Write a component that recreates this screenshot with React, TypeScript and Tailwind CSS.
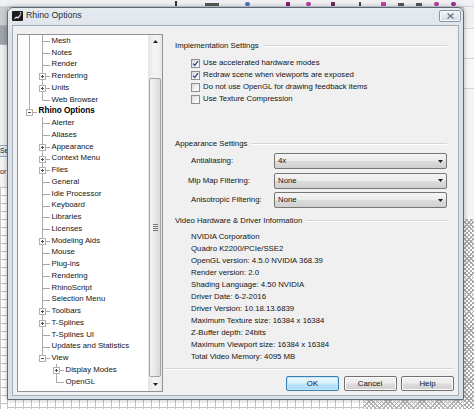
import React from 'react';

// Rhino Options dialog (OpenGL page) over a sliver of the Rhino main window.

type TreeNode = {
  label: string;
  level: number;
  box?: 'plus' | 'minus';
  last?: boolean;
  through?: number[];
  bold?: boolean;
};

const ROW_H = 11.75;
const LINE = '#a8a8a8';
const LEVEL_X = [11.5, 24.5, 38.5];
const lineX = (level: number) => LEVEL_X[level];

const treeNodes: TreeNode[] = [
  { label: 'Mesh', level: 1, through: [0] },
  { label: 'Notes', level: 1, through: [0] },
  { label: 'Render', level: 1, through: [0] },
  { label: 'Rendering', level: 1, box: 'plus', through: [0] },
  { label: 'Units', level: 1, box: 'plus', through: [0] },
  { label: 'Web Browser', level: 1, last: true, through: [0] },
  { label: 'Rhino Options', level: 0, box: 'minus', last: true, bold: true },
  { label: 'Alerter', level: 1 },
  { label: 'Aliases', level: 1 },
  { label: 'Appearance', level: 1, box: 'plus' },
  { label: 'Context Menu', level: 1, box: 'plus' },
  { label: 'Files', level: 1, box: 'plus' },
  { label: 'General', level: 1 },
  { label: 'Idle Processor', level: 1 },
  { label: 'Keyboard', level: 1 },
  { label: 'Libraries', level: 1 },
  { label: 'Licenses', level: 1 },
  { label: 'Modeling Aids', level: 1, box: 'plus' },
  { label: 'Mouse', level: 1 },
  { label: 'Plug-ins', level: 1 },
  { label: 'Rendering', level: 1 },
  { label: 'RhinoScript', level: 1 },
  { label: 'Selection Menu', level: 1 },
  { label: 'Toolbars', level: 1, box: 'plus' },
  { label: 'T-Splines', level: 1, box: 'plus' },
  { label: 'T-Splines UI', level: 1 },
  { label: 'Updates and Statistics', level: 1 },
  { label: 'View', level: 1, box: 'minus', last: true },
  { label: 'Display Modes', level: 2, box: 'plus' },
  { label: 'OpenGL', level: 2, last: true },
];

const driverInfo = [
  'NVIDIA Corporation',
  'Quadro K2200/PCIe/SSE2',
  'OpenGL version: 4.5.0 NVIDIA 368.39',
  'Render version: 2.0',
  'Shading Language: 4.50 NVIDIA',
  'Driver Date: 6-2-2016',
  'Driver Version: 10.18.13.6839',
  'Maximum Texture size: 16384 x 16384',
  'Z-Buffer depth: 24bits',
  'Maximum Viewport size: 16384 x 16384',
  'Total Video Memory: 4095 MB',
];

function TreeRow({ node }: { node: TreeNode }) {
  const x = lineX(node.level);
  const cy = 6.5;
  return (
    <div className="flex h-[11.75px] items-center whitespace-nowrap">
      <svg width={x + 9} height={ROW_H} className="shrink-0">
        {(node.through ?? []).map((l) => (
          <line key={l} x1={lineX(l)} x2={lineX(l)} y1={0} y2={ROW_H} stroke={LINE} />
        ))}
        {node.box ? (
          <>
            <line x1={x} x2={x} y1={0} y2={cy - 3} stroke={LINE} />
            {!node.last && <line x1={x} x2={x} y1={cy + 3} y2={ROW_H} stroke={LINE} />}
            <line x1={x + 3} x2={x + 7.5} y1={cy} y2={cy} stroke={LINE} />
            <rect x={x - 3} y={cy - 3} width={6} height={6} fill="#fdfdfd" stroke="#b0b0b0" />
            <line x1={x - 1.5} x2={x + 1.5} y1={cy} y2={cy} stroke="#505050" />
            {node.box === 'plus' && (
              <line x1={x} x2={x} y1={cy - 1.5} y2={cy + 1.5} stroke="#505050" />
            )}
          </>
        ) : (
          <>
            <line x1={x} x2={x} y1={0} y2={node.last ? cy : ROW_H} stroke={LINE} />
            <line x1={x} x2={x + 7.5} y1={cy} y2={cy} stroke={LINE} />
          </>
        )}
      </svg>
      <span className={node.bold ? 'text-[8.2px] font-bold text-black' : ''}>{node.label}</span>
    </div>
  );
}

function Arrow({ up }: { up?: boolean }) {
  return (
    <svg width="5" height="3" viewBox="0 0 5 3">
      <polygon points={up ? '0,3 5,3 2.5,0' : '0,0 5,0 2.5,3'} fill="#222" />
    </svg>
  );
}

function ScrollBar() {
  return (
    <div className="flex w-[14px] shrink-0 flex-col bg-[linear-gradient(to_right,#e4e4e4,#f3f3f3_40%,#f3f3f3_70%,#e6e6e6)]">
      <div className="flex h-[13px] items-center justify-center">
        <Arrow up />
      </div>
      <div className="h-[30px]" />
      <div className="mx-[1px] flex flex-1 items-center justify-center rounded-[2px] border border-[#a3a3a3] bg-[linear-gradient(to_right,#f4f4f4,#e8e8e8_50%,#d8d8d8)]">
        <div className="flex flex-col gap-[1px]">
          <div className="h-px w-[5px] bg-[#7a7a7a]" />
          <div className="h-px w-[5px] bg-[#7a7a7a]" />
          <div className="h-px w-[5px] bg-[#7a7a7a]" />
          <div className="h-px w-[5px] bg-[#7a7a7a]" />
        </div>
      </div>
      <div className="h-px" />
      <div className="flex h-[13px] items-center justify-center">
        <Arrow />
      </div>
    </div>
  );
}

function GroupHeader({ title }: { title: string }) {
  return (
    <div className="flex h-[10px] items-center">
      <span className="whitespace-nowrap">{title}</span>
      <div className="ml-[4px] h-[2px] flex-1 border-t border-b border-t-[#d5d5d5] border-b-white" />
    </div>
  );
}

function CheckRow({ checked, label }: { checked?: boolean; label: string }) {
  return (
    <div className="flex h-[12px] items-center">
      <span className="flex h-[9px] w-[9px] items-center justify-center border border-[#8e8f8f] bg-[linear-gradient(135deg,#d8d8d8,#f4f4f4_60%,#ffffff)]">
        {checked && (
          <svg width="7" height="7" viewBox="0 0 7 7">
            <path d="M1 3.6 L2.8 5.5 L6 1.2" fill="none" stroke="#2d4c96" strokeWidth="1.3" />
          </svg>
        )}
      </span>
      <span className="ml-[3px] whitespace-nowrap">{label}</span>
    </div>
  );
}

function ComboRow({ label, value, shift }: { label: string; value: string; shift?: boolean }) {
  return (
    <div className="flex h-[16px] items-center">
      <span className={shift ? '-ml-[3px] w-[86px]' : 'w-[83px]'}>{label}</span>
      <div className="flex h-full w-[173px] items-center rounded-[2px] border border-[#767676] bg-[linear-gradient(#f4f4f4,#ebebeb_48%,#dcdcdc_52%,#d0d0d0)] pl-[3px] pr-[3px]">
        <span className="flex-1">{value}</span>
        <Arrow />
      </div>
    </div>
  );
}

function DialogButton({ label, primary }: { label: string; primary?: boolean }) {
  return (
    <div
      className={
        primary
          ? 'flex h-[15px] w-[53px] items-center justify-center rounded-[2px] border border-[#3c7fb1] bg-[linear-gradient(#eaf6fd,#d9f0fc_48%,#bee6fd_52%,#a7d9f5)] shadow-[inset_0_0_0_1px_#c4e5f6]'
          : 'flex h-[15px] w-[53px] items-center justify-center rounded-[2px] border border-[#707070] bg-[linear-gradient(#f2f2f2,#ebebeb_48%,#dddddd_52%,#cfcfcf)] shadow-[inset_0_0_0_1px_#fcfcfc]'
      }
    >
      {label}
    </div>
  );
}

function RhinoIcon() {
  return (
    <svg width="11" height="10" viewBox="0 0 11 10">
      <rect x="0" y="0" width="11" height="10" rx="1" fill="#1d1d1d" />
      <path d="M1.5 8.5 L4 5.5 L6 6 L9.5 1.5 L8.5 4.5 L6.5 7.5 L4.5 7 Z" fill="#f4f4f4" />
      <path d="M7.5 1 L9.5 1.2 L8.6 2.4 Z" fill="#f4f4f4" />
    </svg>
  );
}

function CloseButton() {
  return (
    <div className="-mr-[2px] mt-[2px] flex h-[12px] w-[22px] items-center justify-center rounded-[2px] border border-[#8796a6] bg-[linear-gradient(#f3f6f9,#e2e8ee_50%,#d3dbe4)] shadow-[inset_0_0_0_1px_#f7f9fb]">
      <svg width="7" height="6" viewBox="0 0 7 6">
        <path d="M0.5 0.5 L6.5 5.5 M6.5 0.5 L0.5 5.5" stroke="#6a7888" strokeWidth="1.4" />
      </svg>
    </div>
  );
}

function OptionsDialog() {
  return (
    <div className="absolute left-[7px] top-[7px] flex h-[393px] w-[457px] flex-col rounded-t-[6px] border border-[#5e6976] bg-[linear-gradient(#e6ebf0,#dbe2e9_30px,#d9e0e8)] px-[4px] pb-[3px] shadow-[0_0_5px_rgba(0,0,0,0.3)]">
      <div className="flex h-[17px] items-start">
        <div className="mt-[3px]">
          <RhinoIcon />
        </div>
        <span className="ml-[3px] mt-[3px] text-[8.8px] text-[#24303c]">Rhino Options</span>
        <div className="flex-1" />
        <CloseButton />
      </div>

      <div className="flex flex-1 border border-[#a4aeb9] bg-[#f0f0f0]">
        <div className="mb-[3px] ml-[4px] mt-[8px] flex w-[146px] shrink-0 border border-[#8e939a] bg-white">
          <div className="flex-1 overflow-hidden">
            {treeNodes.map((n, i) => (
              <TreeRow key={i} node={n} />
            ))}
          </div>
          <ScrollBar />
        </div>

        <div className="flex flex-1 flex-col pb-[4px] pl-[2px] pr-[4px]">
          <div className="pl-[10px] pr-[7px]">
            <div className="mt-[15px]">
              <GroupHeader title="Implementation Settings" />
            </div>
            <div className="mt-[6px] pl-[16px]">
              <CheckRow checked label="Use accelerated hardware modes" />
              <CheckRow checked label="Redraw scene when viewports are exposed" />
              <CheckRow label="Do not use OpenGL for drawing feedback items" />
              <CheckRow label="Use Texture Compression" />
            </div>

            <div className="mt-[34px]">
              <GroupHeader title="Appearance Settings" />
            </div>
            <div className="mt-[4px] flex flex-col gap-[3.5px] pl-[16px]">
              <ComboRow label="Antialiasing:" value="4x" />
              <ComboRow label="Mip Map Filtering:" value="None" shift />
              <ComboRow label="Anisotropic Filtering:" value="None" />
            </div>

            <div className="mt-[8px]">
              <GroupHeader title="Video Hardware & Driver Information" />
            </div>
            <div className="mt-[4.7px] pl-[16px]">
              {driverInfo.map((t) => (
                <div key={t} className="flex h-[12px] items-center whitespace-nowrap">
                  {t}
                </div>
              ))}
            </div>
          </div>

          <div className="mt-[5.3px] h-[2px] border-t border-b border-t-[#d5d5d5] border-b-white" />

          <div className="mt-[6px] flex justify-end gap-[4.5px]">
            <DialogButton label="OK" primary />
            <DialogButton label="Cancel" />
            <DialogButton label="Help" />
          </div>
        </div>
      </div>
    </div>
  );
}

function BackgroundApp() {
  return (
    <div className="flex h-full w-full flex-col">
      <div className="flex h-[7px] items-end gap-[6px] border-b border-[#cfd4da] bg-[#eef0f3] pl-[175px]">
        <div className="h-[5px] w-[2px] bg-[#333]" />
        <div className="ml-[22px] h-[3px] w-[14px] bg-[#555]" />
        <div className="ml-[20px] h-[4px] w-[5px] rounded-full bg-[#4a6fc2]" />
        <div className="ml-[30px] h-[4px] w-[4px] bg-[#8d1c6a]" />
        <div className="ml-[10px] h-[4px] w-[5px] rounded-full bg-[#b23aa3]" />
        <div className="ml-[14px] h-[4px] w-[4px] bg-[#6a2c5a]" />
        <div className="ml-[18px] h-[4px] w-[2px] bg-[#444]" />
        <div className="ml-[14px] h-[4px] w-[5px] bg-[#c040b0]" />
        <div className="ml-[6px] h-[3px] w-[6px] bg-[#555]" />
        <div className="ml-[6px] h-[3px] w-[6px] bg-[#555]" />
        <div className="ml-[6px] h-[4px] w-[5px] rounded-full bg-[#b23aa3]" />
        <div className="ml-[6px] h-[4px] w-[5px] rounded-full bg-[#9a2d8c]" />
      </div>
      <div className="flex flex-1">
        <div className="flex w-[7px] flex-col">
          <div className="h-[18px] bg-[#c9cdd2]" />
          <div className="h-[20px] border-y border-[#b0b0b0] bg-[#9ea3a8]" />
          <div className="h-[100px] bg-[#eceeef]" />
          <div className="h-[12px] border-y border-[#9aa6b4] bg-[#dfe8f1] text-[7px] leading-[10px] text-[#222]">Se</div>
          <div className="h-[30px] bg-[#f2f2f2] text-[7px] leading-[30px] text-[#222]">or</div>
          <div className="flex-1 bg-white bg-[linear-gradient(to_right,#c4c4c4_1px,transparent_1px),linear-gradient(#c4c4c4_1px,transparent_1px)] bg-[length:8px_8px]" />
        </div>
        <div className="flex flex-1 flex-col bg-white bg-[linear-gradient(to_right,#c4c4c4_1px,transparent_1px),linear-gradient(#c4c4c4_1px,transparent_1px)] bg-[length:8px_10px]">
          <div className="flex-1" />
          <div className="ml-[356px] h-[10px] bg-white bg-[repeating-linear-gradient(45deg,#b4b4b4_0_1px,transparent_1px_3px),repeating-linear-gradient(-45deg,#b4b4b4_0_1px,transparent_1px_3px)]" />
        </div>
        <div className="flex w-[10px] flex-col bg-[#eef0f2]">
          <div className="h-[22px] border-b border-[#d0d4d8]" />
          <div className="h-[30px] border-b border-[#d0d4d8] bg-[#f6f7f8]" />
          <div className="h-[30px] border-b border-[#d0d4d8] bg-[#f6f7f8]" />
          <div className="h-[130px] bg-[#f3f4f5]" />
          <div className="flex-1 bg-white bg-[repeating-linear-gradient(45deg,#a9a9a9_0_1px,transparent_1px_3px),repeating-linear-gradient(-45deg,#a9a9a9_0_1px,transparent_1px_3px)]" />
        </div>
      </div>
    </div>
  );
}

export default function App() {
  return (
    <div className="relative h-[409px] w-[474px] overflow-hidden font-['Liberation_Sans',Arial,sans-serif] text-[7.8px] leading-none text-[#141414]">
      <BackgroundApp />
      <OptionsDialog />
    </div>
  );
}
